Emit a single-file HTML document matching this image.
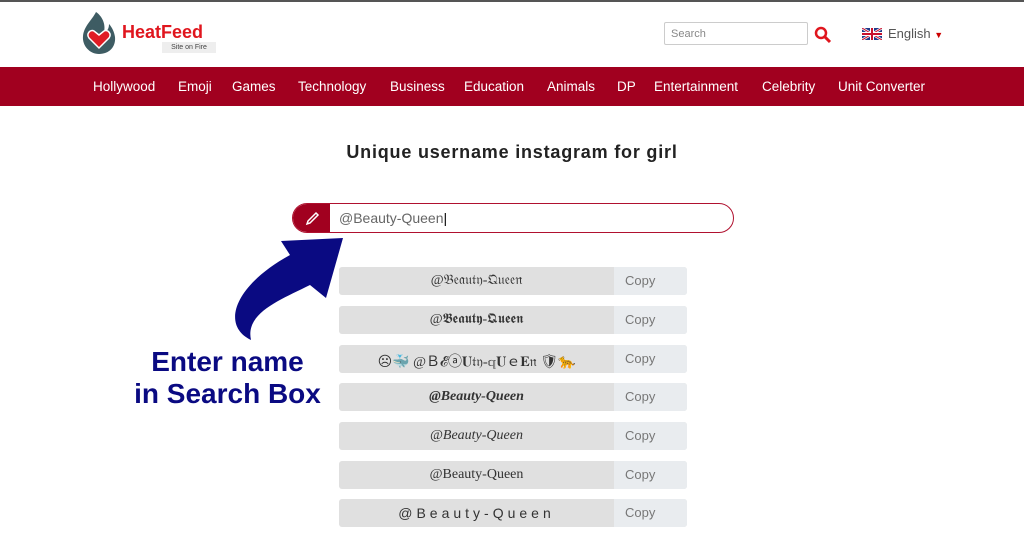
<!DOCTYPE html>
<html><head><style>
body{margin:0;width:1024px;height:536px;background:#fff;font-family:"Liberation Sans",sans-serif;position:relative;overflow:hidden}
.top{position:absolute;left:0;top:0;width:1024px;height:2px;background:#555}
.nav{position:absolute;left:0;top:67px;width:1024px;height:39px;background:#a1001f;color:#fff;font-size:13.5px}
.nav span{position:absolute;top:12px}
.row{position:absolute;left:339px;width:348px;height:28px;background:#e0e0e0;border-radius:3px;font-family:"Liberation Serif",serif;font-size:14px;color:#333}
.row .t{position:absolute;left:0;width:275px;text-align:center;top:6px}
.row .c{position:absolute;left:275px;top:0;width:73px;height:28px;background:#e9ecef;color:#777;font-family:"Liberation Sans",sans-serif;font-size:13px;line-height:28px;padding-left:11px;box-sizing:border-box;border-radius:0 3px 3px 0}
</style></head><body>
<div class="top"></div>
<svg style="position:absolute;left:82px;top:12px" width="34" height="42" viewBox="0 0 34 42"><path d="M14 0 C10 8 2 14 1 24 C0 34 8 42 17 42 C27 42 34 35 33 25 C32 17 27 12 27 12 C27 18 24 20 22 20 C24 12 20 4 14 0Z" fill="#3e5c63"/><path d="M17 36 L7 26 C4 22 8 17 12 19 L17 23 L22 19 C26 17 30 22 27 26Z" fill="#e01b24" stroke="#fff" stroke-width="1.5"/></svg>
<div style="position:absolute;left:122px;top:22px;color:#e0161e;font-weight:bold;font-size:18px">HeatFeed</div>
<div style="position:absolute;left:162px;top:42px;width:54px;height:11px;background:#eee;font-size:7px;color:#444;text-align:center;line-height:11px">Site on Fire</div>
<div style="position:absolute;left:664px;top:22px;width:144px;height:23px;border:1px solid #ccc;border-radius:2px;box-sizing:border-box;font-size:11px;color:#888;padding:5px 6px">Search</div>
<svg style="position:absolute;left:814px;top:26px" width="18" height="18" viewBox="0 0 18 18"><circle cx="7" cy="7" r="5" fill="none" stroke="#e0161e" stroke-width="2.5"/><path d="M11 11 L16 16" stroke="#e0161e" stroke-width="3"/></svg>
<svg style="position:absolute;left:862px;top:28px" width="20" height="12" viewBox="0 0 20 12"><rect width="20" height="12" fill="#1f3a8a"/><path d="M0 0L20 12M20 0L0 12" stroke="#fff" stroke-width="2.5"/><path d="M0 0L20 12M20 0L0 12" stroke="#c8102e" stroke-width="1"/><path d="M10 0V12M0 6H20" stroke="#fff" stroke-width="4"/><path d="M10 0V12M0 6H20" stroke="#c8102e" stroke-width="2"/></svg>
<div style="position:absolute;left:888px;top:26px;font-size:13px;color:#555">English <span style="color:#c00;font-size:9px">▼</span></div>
<div class="nav"><span style="left:93px">Hollywood</span><span style="left:178px">Emoji</span><span style="left:232px">Games</span><span style="left:298px">Technology</span><span style="left:390px">Business</span><span style="left:464px">Education</span><span style="left:547px">Animals</span><span style="left:617px">DP</span><span style="left:654px">Entertainment</span><span style="left:762px">Celebrity</span><span style="left:838px">Unit Converter</span></div>
<div style="position:absolute;left:0;width:1024px;top:142px;text-align:center;font-size:18px;color:#222;letter-spacing:0.8px;font-weight:bold;">Unique username instagram for girl</div>
<div style="position:absolute;left:292px;top:203px;width:442px;height:30px;border:1px solid #b0112f;border-radius:15px;box-sizing:border-box;overflow:hidden">
<div style="position:absolute;left:0;top:0;width:37px;height:30px;background:#a1001f"></div>
<svg style="position:absolute;left:11px;top:7px" width="16" height="16" viewBox="0 0 16 16"><path d="M3 13 L4 10 L12 2 L14 4 L6 12Z" fill="none" stroke="#fff" stroke-width="1.5"/></svg>
<div style="position:absolute;left:46px;top:6px;font-size:14px;color:#666">@Beauty-Queen<span style="color:#000">|</span></div></div>
<svg style="position:absolute;left:210px;top:225px" width="140" height="125" viewBox="0 0 140 125"><path d="M133 13 L116 73 L100 60 C70 75 35 88 41 115 C10 100 25 60 80 30 L71 16 Z" fill="#0a0a82"/></svg>
<div style="position:absolute;left:115px;top:346px;width:225px;text-align:center;font-size:28px;font-weight:bold;color:#0a0a82;line-height:32px">Enter name<br>in Search Box</div>
<div class="row" style="top:267px"><div class="t">@𝔅𝔢𝔞𝔲𝔱𝔶-𝔔𝔲𝔢𝔢𝔫</div><div class="c">Copy</div></div>
<div class="row" style="top:306px"><div class="t">@𝕭𝖊𝖆𝖚𝖙𝖞-𝕼𝖚𝖊𝖊𝖓</div><div class="c">Copy</div></div>
<div class="row" style="top:345px"><div class="t">☹🐳 @Ｂ𝓔ⓐ𝐔𝔱𝔶-𝕢𝐔ｅ𝐄𝔫 🛡🐆</div><div class="c">Copy</div></div>
<div class="row" style="top:383px"><div class="t"><b><i>@Beauty-Queen</i></b></div><div class="c">Copy</div></div>
<div class="row" style="top:422px"><div class="t"><i>@Beauty-Queen</i></div><div class="c">Copy</div></div>
<div class="row" style="top:461px"><div class="t">@Beauty-Queen</div><div class="c">Copy</div></div>
<div class="row" style="top:499px"><div class="t" style="font-family:'Liberation Sans',sans-serif;letter-spacing:4px">@Beauty-Queen</div><div class="c">Copy</div></div>
</body></html>
